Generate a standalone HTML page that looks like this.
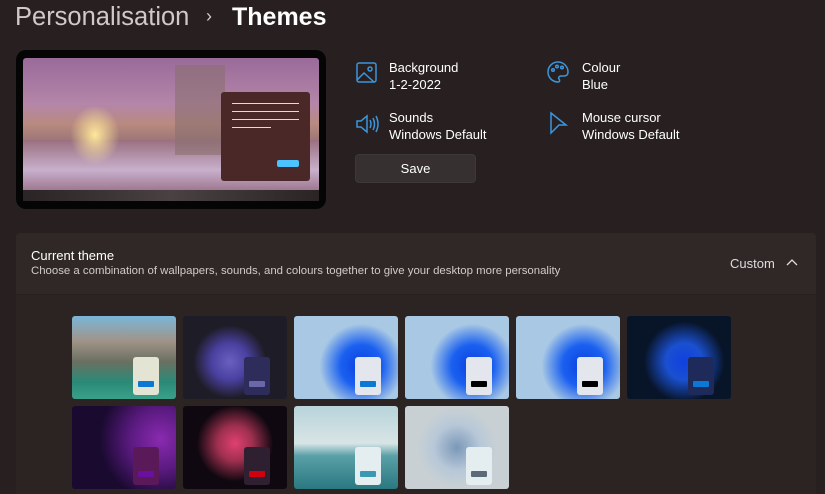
<!DOCTYPE html><html><head><style>
body{margin:0;width:825px;height:494px;background:#282020;font-family:"Liberation Sans",sans-serif;color:#fff;overflow:hidden;position:relative}
.a{position:absolute}
.t{width:104px;height:83px;border-radius:3px;overflow:hidden}
.s{position:absolute;left:61px;top:41px;width:26px;height:38px;border-radius:3px}
.s i{position:absolute;left:5px;top:24px;width:16px;height:6px;border-radius:1px}
.lbl{font-size:13px;line-height:17px}
</style></head><body>
<div class="a" style="left:15px;top:3px;font-size:25.5px;color:#cfc9c8">Personalisation</div>
<div class="a" style="left:206px;top:6px;font-size:18px;color:#ccc">›</div>
<div class="a" style="left:232px;top:3px;font-size:25px;font-weight:bold">Themes</div>
<div class="a" style="left:16px;top:50px;width:310px;height:159px;background:#050505;border-radius:10px"></div>
<div class="a" style="left:23px;top:58px;width:296px;height:132px;border-radius:3px 3px 0 0;background:linear-gradient(180deg,#9a6a9a 0%,#b486a8 35%,#b98a7f 50%,#8b6a72 70%,#a890b0 100%)"></div>
<div class="a" style="left:23px;top:140px;width:296px;height:50px;background:linear-gradient(180deg,#9a7080,#c8b0cc 60%,#a07890)"></div>
<div class="a" style="left:70px;top:105px;width:50px;height:60px;background:radial-gradient(#ffe89a,#c0904000 70%)"></div>
<div class="a" style="left:175px;top:65px;width:50px;height:90px;background:#8a7070;opacity:.6"></div>
<div class="a" style="left:23px;top:190px;width:296px;height:11px;background:linear-gradient(90deg,#2a2424,#4a4242,#2a2424)"></div>
<div class="a" style="left:221px;top:92px;width:89px;height:89px;background:#4a2828;border-radius:3px"></div>
<div class="a" style="left:232px;top:103px;width:67px;height:1px;background:#ddd"></div>
<div class="a" style="left:232px;top:111px;width:67px;height:1px;background:#ddd"></div>
<div class="a" style="left:232px;top:119px;width:67px;height:1px;background:#ddd"></div>
<div class="a" style="left:232px;top:127px;width:39px;height:1px;background:#ddd"></div>
<div class="a" style="left:277px;top:160px;width:22px;height:7px;background:#4cc2ff;border-radius:2px"></div>
<svg class="a" style="left:356px;top:62px" width="22" height="22" viewBox="0 0 22 22" fill="none" stroke="#3a96dd" stroke-width="1.5"><rect x="1" y="1" width="19" height="19" rx="2"/><circle cx="14" cy="7" r="2"/><path d="M1 18l7-7 10 9"/></svg>
<svg class="a" style="left:355px;top:113px" width="24" height="22" viewBox="0 0 24 22" fill="none" stroke="#3a96dd" stroke-width="1.5"><path d="M2 8h4l6-5v16l-6-5H2z"/><path d="M15 7q2 4 0 8M18 5q3 6 0 12M21 3q4 8 0 16"/></svg>
<svg class="a" style="left:546px;top:60px" width="24" height="24" viewBox="0 0 24 24" fill="none" stroke="#3a96dd" stroke-width="1.5"><path d="M12 2a10 10 0 1 0 0 20c2 0 2-2 1-3s0-3 2-3h3c2 0 4-1 4-4C22 6 17 2 12 2z"/><circle cx="7" cy="10" r="1.3"/><circle cx="11" cy="6.5" r="1.3"/><circle cx="16" cy="7.5" r="1.3"/></svg>
<svg class="a" style="left:549px;top:111px" width="20" height="24" viewBox="0 0 20 24" fill="none" stroke="#3a96dd" stroke-width="1.5"><path d="M2 2l15 12h-7l-8 8z"/></svg>
<div class="a lbl" style="left:389px;top:59px">Background<br>1-2-2022</div>
<div class="a lbl" style="left:389px;top:109px">Sounds<br>Windows Default</div>
<div class="a lbl" style="left:582px;top:59px">Colour<br>Blue</div>
<div class="a lbl" style="left:582px;top:109px">Mouse cursor<br>Windows Default</div>
<div class="a" style="left:355px;top:154px;width:121px;height:29px;background:#363030;border:1px solid #3e3838;border-radius:4px;box-sizing:border-box;text-align:center;line-height:27px;font-size:13px">Save</div>
<div class="a" style="left:16px;top:233px;width:800px;height:61px;background:#2f2827;border-radius:4px 4px 0 0"></div>
<div class="a" style="left:16px;top:295px;width:800px;height:199px;background:#2b2423"></div>
<div class="a" style="left:31px;top:248px;font-size:13px">Current theme</div>
<div class="a" style="left:31px;top:265px;font-size:11.4px;color:#d0cac9">Choose a combination of wallpapers, sounds, and colours together to give your desktop more personality</div>
<div class="a" style="left:730px;top:256px;font-size:13px;color:#ddd">Custom</div>
<svg class="a" style="left:786px;top:257px" width="12" height="10" viewBox="0 0 12 10" fill="none" stroke="#ddd" stroke-width="1.3"><path d="M1 8l5-5 5 5"/></svg>

<div class="a t" style="left:72px;top:316px;background:linear-gradient(180deg,#7ab6d8 0%,#a09488 30%,#6a7060 55%,#2a8a78 80%,#3aa08a)"><div class="s" style="background:#e4e4d4"><i style="background:#0a78d4"></i></div></div>
<div class="a t" style="left:183px;top:316px;background:radial-gradient(circle at 45% 55%,#6a60c0 0%,#4a40a0 25%,#1e1c26 50%)"><div class="s" style="background:#2e2c5a"><i style="background:#6a68a8"></i></div></div>
<div class="a t" style="left:294px;top:316px;background:radial-gradient(circle at 65% 60%,#0a40e0 0%,#1a60f0 25%,#a8c8e4 50%)"><div class="s" style="background:#e4e6ee"><i style="background:#0a78d4"></i></div></div>
<div class="a t" style="left:405px;top:316px;background:radial-gradient(circle at 65% 60%,#0a40e0 0%,#1a60f0 25%,#a8c8e4 50%)"><div class="s" style="background:#e4e6ee"><i style="background:#000"></i></div></div>
<div class="a t" style="left:516px;top:316px;background:radial-gradient(circle at 65% 60%,#0a40e0 0%,#1a60f0 25%,#a8c8e4 50%)"><div class="s" style="background:#e4e6ee"><i style="background:#000"></i></div></div>
<div class="a t" style="left:627px;top:316px;background:radial-gradient(circle at 55% 55%,#1040e0 0%,#1a50d0 25%,#081428 55%)"><div class="s" style="background:#1e2a5a"><i style="background:#0a78d4"></i></div></div>
<div class="a t" style="left:72px;top:406px;background:radial-gradient(circle at 85% 40%,#8a2ab0 0%,#5a1a80 30%,#1a0a30 60%)"><div class="s" style="background:#5a1a5a"><i style="background:#6a10a0"></i></div></div>
<div class="a t" style="left:183px;top:406px;background:radial-gradient(circle at 50% 45%,#e04070 0%,#a03050 25%,#100810 55%)"><div class="s" style="background:#2e2030"><i style="background:#d00010"></i></div></div>
<div class="a t" style="left:294px;top:406px;background:linear-gradient(180deg,#b8d4da 0%,#d8e4e6 45%,#5aa0a8 60%,#2a7880)"><div class="s" style="background:#e4eef0"><i style="background:#3a98b0"></i></div></div>
<div class="a t" style="left:405px;top:406px;background:radial-gradient(circle at 50% 50%,#7a98b8 0%,#b8c8d8 35%,#c8d0d4 60%)"><div class="s" style="background:#e4eef0"><i style="background:#5a6a78"></i></div></div>
</body></html>
